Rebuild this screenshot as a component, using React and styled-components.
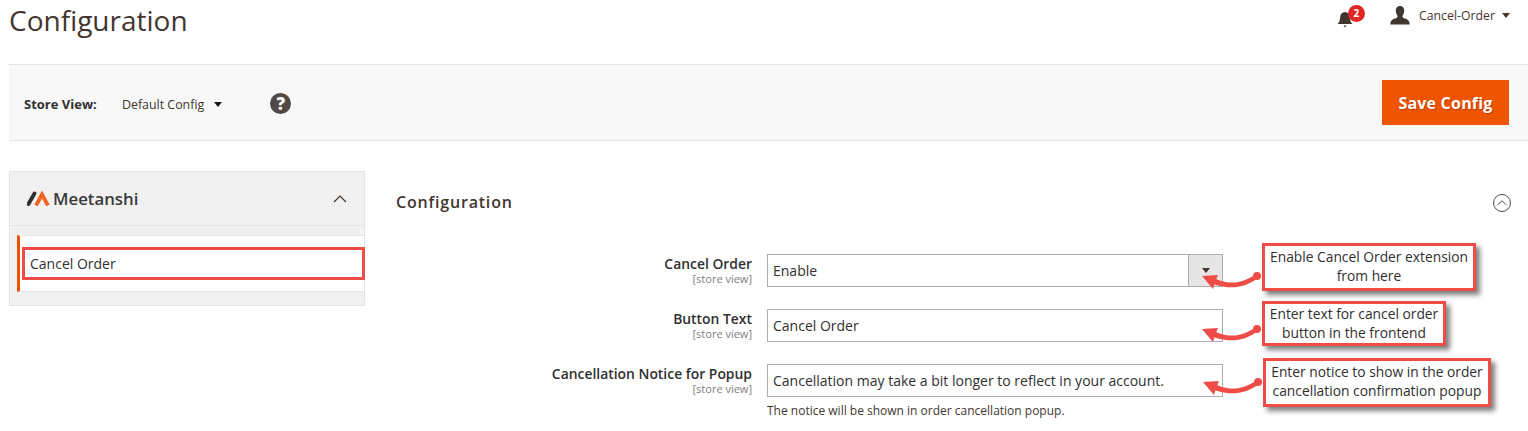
import React from "react"
import styled, { createGlobalStyle } from "styled-components"

const fields = [
  {
    label: "Cancel Order",
    value: "Enable",
    select: true,
    note: ["Enable Cancel Order extension", "from here"],
    left: 867,
    top: -11,
    width: 214,
    height: 48,
    pad: 1,
    arrowLeft: 805,
    arrowTop: 16,
  },
  {
    label: "Button Text",
    value: "Cancel Order",
    note: ["Enter text for cancel order", "button in the frontend"],
    left: 867,
    top: -8,
    width: 184,
    height: 45,
    pad: 0,
    arrowLeft: 805,
    arrowTop: 14,
  },
  {
    label: "Cancellation Notice for Popup",
    value: "Cancellation may take a bit longer to reflect in your account.",
    hint: "The notice will be shown in order cancellation popup.",
    note: ["Enter notice to show in the order", "cancellation confirmation popup"],
    left: 868,
    top: -6,
    width: 228,
    height: 49,
    pad: 1,
    arrowLeft: 806,
    arrowTop: 12,
  },
]

const Arrow = ({ left, top }) => (
  <ArrowSvg $left={left} $top={top} width="62" height="24" viewBox="0 0 62 24">
    <circle cx="57" cy="6" r="4" fill="#ef4c47" />
    <path d="M57 4C46 10 35 17 16 9L13 14C34 21 47 16 58 8Z" fill="#ef4c47" />
    <path d="M2 6L18 5L15 12L13 19Z" fill="#ef4c47" />
  </ArrowSvg>
)

const Logo = () => (
  <svg width="23" height="15" viewBox="0 0 23 15">
    <path d="M1.500 13L7.500 2.500" stroke="#2f2f2f" strokeWidth="3.800" strokeLinecap="round" />
    <path d="M9 14.500L15 3.500L21 14.500" fill="none" stroke="#f26322" strokeWidth="3.800" />
  </svg>
)

const App = () => (
  <Page>
    <GlobalStyle />
    <Header>
      <Title>Configuration</Title>
      <Actions>
        <Bell>
          <svg width="16" height="17" viewBox="0 0 16 17">
            <path
              d="M8 1C5 1 3.400 3.200 3.200 6C3 9 2.600 11 .6 13H15.400C13.400 11 13 9 12.800 6C12.600 3.200 11 1 8 1Z"
              fill="#41362f"
            />
            <path d="M6.500 14.500H9.500L8 16.500Z" fill="#41362f" />
          </svg>
          <Badge>2</Badge>
        </Bell>
        <User>
          <svg width="20" height="19" viewBox="0 0 20 19">
            <path
              d="M10 0C7 0 5.600 2 5.800 5C6 7.500 7 9 7.600 10C7.600 11.500 6.500 12 4.500 12.800C2 13.700 .5 14.600 .3 18.500H19.700C19.500 14.600 18 13.700 15.500 12.800C13.500 12 12.400 11.500 12.400 10C13 9 14 7.500 14.200 5C14.400 2 13 0 10 0Z"
              fill="#41362f"
            />
          </svg>
          <UserName>Cancel-Order</UserName>
          <Caret />
        </User>
      </Actions>
    </Header>

    <Toolbar>
      <StoreLabel>Store View:</StoreLabel>
      <StoreValue>Default Config</StoreValue>
      <Caret $dark />
      <Help>?</Help>
      <SaveButton>Save Config</SaveButton>
    </Toolbar>

    <Content>
      <Sidebar>
        <SideHead>
          <Brand>
            <Logo />
            <BrandName>Meetanshi</BrandName>
          </Brand>
          <svg width="14" height="8" viewBox="0 0 14 8">
            <path d="M1 7L7 1L13 7" fill="none" stroke="#41362f" strokeWidth="1.200" />
          </svg>
        </SideHead>
        <SideBody>
          <SideItem>
            <SideLink>Cancel Order</SideLink>
          </SideItem>
        </SideBody>
      </Sidebar>

      <Main>
        <SectionHead>
          <SectionTitle>Configuration</SectionTitle>
          <svg width="20" height="20" viewBox="0 0 20 20">
            <circle cx="10" cy="10" r="8.500" fill="none" stroke="#514943" strokeWidth="1" />
            <path d="M5.500 12L10 7.800L14.500 12" fill="none" stroke="#514943" strokeWidth="1" />
          </svg>
        </SectionHead>
        <Fields>
          {fields.map((f) => (
            <Row key={f.label}>
              <LabelCol>
                <FieldLabel>{f.label}</FieldLabel>
                <Scope>[store view]</Scope>
              </LabelCol>
              <Control>
                <InputBox>
                  {f.value}
                  {f.select && (
                    <SelectHandle>
                      <Caret />
                    </SelectHandle>
                  )}
                </InputBox>
                {f.hint && <Hint>{f.hint}</Hint>}
              </Control>
              <Arrow left={f.arrowLeft} top={f.arrowTop} />
              <Callout $left={f.left} $top={f.top} $width={f.width} $height={f.height} $pad={f.pad}>
                {f.note[0]}
                <br />
                {f.note[1]}
              </Callout>
            </Row>
          ))}
        </Fields>
      </Main>
    </Content>
  </Page>
)

const GlobalStyle = createGlobalStyle`
  html, body {
    margin: 0;
    background: #fff;
  }
  body {
    font-family: "Open Sans", "Noto Sans", sans-serif;
    color: #303030;
  }
`

const Page = styled.div`
  width: 1528px;
  height: 431px;
  overflow: hidden;
  padding-left: 9px;
  box-sizing: border-box;
`

const Header = styled.header`
  display: flex;
  justify-content: space-between;
  height: 64px;
`

const Title = styled.h1`
  margin: 0;
  padding-top: 1px;
  font-size: 28px;
  line-height: 38px;
  font-weight: 400;
  color: #41362f;
`

const Actions = styled.div`
  display: flex;
  align-items: flex-start;
  padding: 6px 18px 0 0;
`

const Bell = styled.div`
  position: relative;
  width: 16px;
  height: 17px;
  margin-top: 5px;
  margin-right: 37px;
`

const Badge = styled.span`
  position: absolute;
  top: -6px;
  left: 11px;
  width: 17px;
  height: 17px;
  border-radius: 50%;
  background: #e22626;
  color: #fff;
  font-size: 10px;
  font-weight: 700;
  line-height: 17px;
  text-align: center;
`

const User = styled.div`
  display: flex;
  align-items: center;
  height: 17px;
  margin-top: 1px;
`

const UserName = styled.span`
  margin: 0 7px 0 9px;
  font-size: 12.300px;
  color: #41362f;
`

const Caret = styled.span`
  width: 0;
  height: 0;
  border-style: solid;
  border-width: 5px 4px 0;
  border-color: ${({ $dark }) => ($dark ? "#1a1a1a" : "#41362f")} transparent transparent;
`

const Toolbar = styled.div`
  display: flex;
  align-items: center;
  height: 72px;
  padding: 3px 19px 0 15px;
  background: #f8f8f8;
  border-top: 1px solid #e3e3e3;
  border-bottom: 1px solid #e3e3e3;
`

const StoreLabel = styled.span`
  width: 98px;
  font-size: 13px;
  font-weight: 700;
  color: #303030;
`

const StoreValue = styled.span`
  margin-right: 10px;
  font-size: 12.400px;
  color: #41362f;
`

const Help = styled.span`
  width: 21px;
  height: 21px;
  margin-left: 48px;
  margin-top: -2px;
  border-radius: 50%;
  background: #514943;
  color: #fff;
  font-size: 17px;
  font-weight: 800;
  line-height: 21px;
  text-align: center;
`

const SaveButton = styled.button`
  width: 127px;
  height: 45px;
  margin-left: auto;
  margin-top: -3px;
  border: 0;
  padding: 0;
  background: #ef5400;
  color: #fff;
  font-family: inherit;
  font-size: 16px;
  font-weight: 700;
  letter-spacing: 0.2px;
  text-shadow: 1px 1px 1px rgba(0, 0, 0, 0.25);
`

const Content = styled.div`
  display: flex;
  padding-top: 30px;
`

const Sidebar = styled.aside`
  width: 356px;
  height: 135px;
  flex: none;
  box-sizing: border-box;
  background: #f1f1f1;
  border: 1px solid #e3e3e3;
`

const SideHead = styled.div`
  display: flex;
  align-items: center;
  justify-content: space-between;
  height: 53px;
  padding: 0 17px;
  border-bottom: 1px solid #e3e3e3;
`

const Brand = styled.div`
  display: flex;
  align-items: center;
  gap: 3px;
`

const BrandName = styled.span`
  font-size: 16.800px;
  font-weight: 600;
  color: #3a3a3a;
`

const SideBody = styled.div`
  padding: 9px 0 13px;
`

const SideItem = styled.div`
  display: flex;
  align-items: center;
  height: 57px;
  margin-left: 7px;
  padding-left: 2px;
  background: #fff;
  border-left: 3px solid #eb5202;
  border-top: 1px solid #e3e3e3;
  border-bottom: 1px solid #e3e3e3;
  box-sizing: border-box;
`

const SideLink = styled.div`
  flex: 1;
  height: 33px;
  margin-right: -1px;
  box-sizing: border-box;
  padding-left: 5px;
  border: 3px solid #ef4c47;
  font-size: 14px;
  font-weight: 500;
  line-height: 27px;
  color: #303030;
`

const Main = styled.main`
  flex: 1;
  padding-left: 30px;
`

const SectionHead = styled.div`
  display: flex;
  align-items: center;
  justify-content: space-between;
  height: 62px;
  padding: 1px 16px 0 1px;
  box-sizing: border-box;
`

const SectionTitle = styled.h2`
  margin: -1px 0 0;
  font-size: 16px;
  font-weight: 600;
  letter-spacing: 0.8px;
  color: #41362f;
`

const Fields = styled.div`
  display: flex;
  flex-direction: column;
  gap: 22px;
  padding-top: 21px;
`

const Row = styled.div`
  position: relative;
  display: flex;
  align-items: flex-start;
`

const LabelCol = styled.div`
  width: 357px;
  flex: none;
  text-align: right;
`

const FieldLabel = styled.div`
  font-size: 13.900px;
  font-weight: 600;
  line-height: 19px;
  color: #303030;
`

const Scope = styled.div`
  font-size: 11px;
  line-height: 12px;
  color: #808080;
`

const Control = styled.div`
  width: 456px;
  flex: none;
  margin-left: 15px;
`

const InputBox = styled.div`
  position: relative;
  height: 33px;
  box-sizing: border-box;
  padding-left: 5px;
  border: 1px solid #adadad;
  font-size: 14px;
  line-height: 31px;
  color: #303030;
  background: #fff;
`

const SelectHandle = styled.span`
  position: absolute;
  top: 0;
  right: 0;
  bottom: 0;
  width: 34px;
  display: flex;
  justify-content: center;
  padding-top: 13px;
  box-sizing: border-box;
  background: #e6e6e6;
  border-left: 1px solid #adadad;
`

const Hint = styled.div`
  margin-top: 6px;
  font-size: 12px;
  line-height: 15px;
  color: #41362f;
`

const ArrowSvg = styled.svg`
  position: absolute;
  left: ${({ $left }) => $left}px;
  top: ${({ $top }) => $top}px;
`

const Callout = styled.div`
  position: absolute;
  left: ${({ $left }) => $left}px;
  top: ${({ $top }) => $top}px;
  width: ${({ $width }) => $width}px;
  height: ${({ $height }) => $height}px;
  box-sizing: border-box;
  padding-top: ${({ $pad }) => $pad}px;
  border: 3px solid #ef4c47;
  background: #fff;
  box-shadow: 4px 4px 5px rgba(0, 0, 0, 0.5);
  font-size: 13.800px;
  line-height: 19px;
  text-align: center;
  color: #303030;
`

export default App
